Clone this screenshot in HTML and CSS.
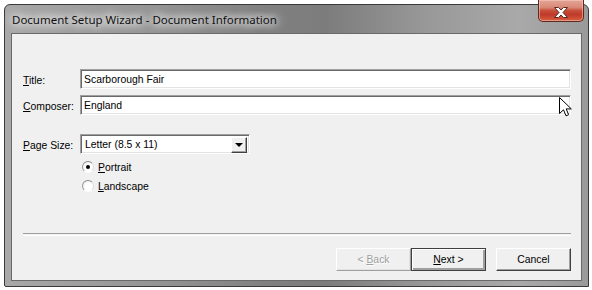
FILE: index.html
```html
<!DOCTYPE html>
<html lang="en">
<head>
  <meta charset="UTF-8">
  <title>Document Setup Wizard</title>
  <link rel="stylesheet" href="styles.css">
</head>
<body>
  <div class="window">
    <div class="titlebar">
      <span class="caption">Document Setup Wizard - Document Information</span>
      <div class="close">
        <svg width="16" height="11" viewBox="0 0 16 11">
          <path d="M1.5 0.5 H5.5 L8 3 L10.5 0.5 H14.5 L10 5.5 L14.5 10.5 H10.5 L8 8 L5.5 10.5 H1.5 L6 5.5 Z" fill="#ffffff" stroke="#5a2a24" stroke-width="1" stroke-linejoin="round"/>
        </svg>
      </div>
    </div>

    <div class="client">
      <div class="row">
        <label><u>T</u>itle:</label>
        <div class="field">Scarborough Fair</div>
      </div>
      <div class="row row-second">
        <label><u>C</u>omposer:</label>
        <div class="field">England</div>
      </div>
      <div class="row row-size">
        <label><u>P</u>age Size:</label>
        <div class="combo">
          <span>Letter (8.5 x 11)</span>
          <span class="drop"><i></i></span>
        </div>
      </div>

      <div class="options">
        <div class="radio"><span class="dot checked"></span><u>P</u>ortrait</div>
        <div class="radio"><span class="dot"></span><u>L</u>andscape</div>
      </div>

      <div class="separator"></div>

      <div class="buttons">
        <button class="btn disabled">&lt; <u>B</u>ack</button>
        <button class="btn default"><u>N</u>ext &gt;</button>
        <button class="btn cancel">Cancel</button>
      </div>

      <!-- mouse pointer over the composer box -->
      <svg class="cursor" width="13" height="20" viewBox="0 0 13 20">
        <path d="M0.5 0.5 L0.5 16.5 L4.5 12.8 L7 18.8 L9.6 17.7 L7.2 11.9 L12.3 11.9 Z" fill="#ffffff" stroke="#000000" stroke-width="1" stroke-linejoin="miter"/>
      </svg>
    </div>
  </div>
</body>
</html>
```

FILE: styles.css
```css
body {
  margin: 0;
  background-color: #ffffff;
  font-family: "Liberation Sans", Arial, sans-serif;
  font-size: 10.4px;
  color: #000000;
}
.window {
  position: relative;
  width: 583px;
  height: 281px;
  margin: 4px 0 0 4px;
  border: 1px solid #3a3a3a;
  border-radius: 6px 6px 0 2px;
  background: linear-gradient(to right, #a8a8a8 0%, #959595 25%, #808080 45%, #7c7c7c 55%, #989898 72%, #a9a9a9 88%, #9a9a9a 100%);
  display: flex;
  flex-direction: column;
}
.titlebar {
  height: 28px;
  flex: none;
  display: flex;
  align-items: center;
  padding-left: 7px;
}
.caption {
  font-family: "Noto Sans", "Open Sans", sans-serif;
  font-size: 11.5px;
  color: #111111;
  margin-top: 1px;
  text-shadow: 0 0 8px #ffffff, 0 0 10px #ffffff, 0 0 12px #ffffff;
}
.close {
  position: absolute;
  top: -5px;
  right: 4px;
  width: 46px;
  height: 22px;
  border: 1px solid #5c2a22;
  border-top: none;
  border-radius: 0 0 5px 5px;
  background: linear-gradient(#e3a496 0%, #d98a79 35%, #c8503a 50%, #c0392b 70%, #d6603f 100%);
  box-shadow: inset 0 0 0 1px rgba(255, 210, 200, 0.5);
  display: flex;
  align-items: center;
  justify-content: center;
  padding-top: 4px;
  box-sizing: border-box;
}
.client {
  position: relative;
  flex: none;
  height: 248px;
  box-sizing: border-box;
  margin: 0 6px 5px 6px;
  border: 1px solid #6a6a6a;
  background-color: #f0f0f0;
  padding: 35px 10px 0 11px;
}
.row {
  display: flex;
  align-items: center;
  height: 20px;
}
.row-second {
  margin-top: 6px;
}
.row-size {
  margin-top: 19px;
}
label {
  width: 57px;
  flex: none;
  padding-top: 2px;
}
.field {
  flex: 1;
  height: 20px;
  box-sizing: border-box;
  border: 1px solid;
  border-color: #a0a0a0 #ffffff #ffffff #a0a0a0;
  box-shadow: inset 1px 1px 0 #696969, inset -1px -1px 0 #e3e3e3;
  background-color: #ffffff;
  padding: 2px 0 0 3px;
  line-height: 15px;
}
.combo {
  width: 170px;
  height: 20px;
  box-sizing: border-box;
  border: 1px solid;
  border-color: #a0a0a0 #ffffff #ffffff #a0a0a0;
  box-shadow: inset 1px 1px 0 #696969, inset -1px -1px 0 #e3e3e3;
  background-color: #ffffff;
  padding: 2px 2px 2px 4px;
  display: flex;
  justify-content: space-between;
  align-items: center;
}
.drop {
  width: 16px;
  height: 16px;
  box-sizing: border-box;
  border: 1px solid;
  border-color: #ffffff #404040 #404040 #ffffff;
  box-shadow: inset -1px -1px 0 #a0a0a0;
  background-color: #f0f0f0;
  display: flex;
  align-items: center;
  justify-content: center;
  margin-top: 1px;
}
.drop i {
  width: 0;
  height: 0;
  border-left: 4px solid transparent;
  border-right: 4px solid transparent;
  border-top: 4px solid #000000;
  margin-top: 1px;
}
.options {
  margin: 5px 0 0 59px;
  display: flex;
  flex-direction: column;
  gap: 3px;
}
.radio {
  height: 16px;
  display: flex;
  align-items: center;
}
.dot {
  width: 12px;
  height: 12px;
  box-sizing: border-box;
  border-radius: 50%;
  border: 1px solid;
  border-color: #8a8a8a #e0e0e0 #ffffff #9a9a9a;
  background: radial-gradient(circle at 60% 60%, #ffffff 40%, #e4e4e4 100%);
  margin-right: 4px;
  display: flex;
  align-items: center;
  justify-content: center;
}
.dot.checked::after {
  content: "";
  width: 4px;
  height: 4px;
  border-radius: 50%;
  background-color: #000000;
}
.separator {
  margin-top: 39px;
  height: 1px;
  border-top: 1px solid #a0a0a0;
  border-bottom: 1px solid #ffffff;
}
.buttons {
  margin-top: 12px;
  display: flex;
  justify-content: flex-end;
}
.btn {
  width: 75px;
  height: 23px;
  box-sizing: border-box;
  margin: 0;
  padding: 0;
  font-family: inherit;
  font-size: inherit;
  color: #000000;
  background-color: #f0f0f0;
  border: 1px solid;
  border-color: #ffffff #404040 #404040 #ffffff;
  box-shadow: inset -1px -1px 0 #a0a0a0;
}
.btn.disabled {
  color: #a0a0a0;
  text-shadow: 1px 1px 0 #ffffff;
  border-color: #ffffff #a0a0a0 #a0a0a0 #ffffff;
  box-shadow: inset -1px -1px 0 #e3e3e3;
}
.btn.default {
  border: 1px solid #404040;
  box-shadow: inset 1px 1px 0 #ffffff, inset -2px -2px 0 #a0a0a0, inset -1px -1px 0 #696969;
}
.btn.cancel {
  margin-left: 10px;
}
.cursor {
  position: absolute;
  left: 547px;
  top: 63px;
}
```
